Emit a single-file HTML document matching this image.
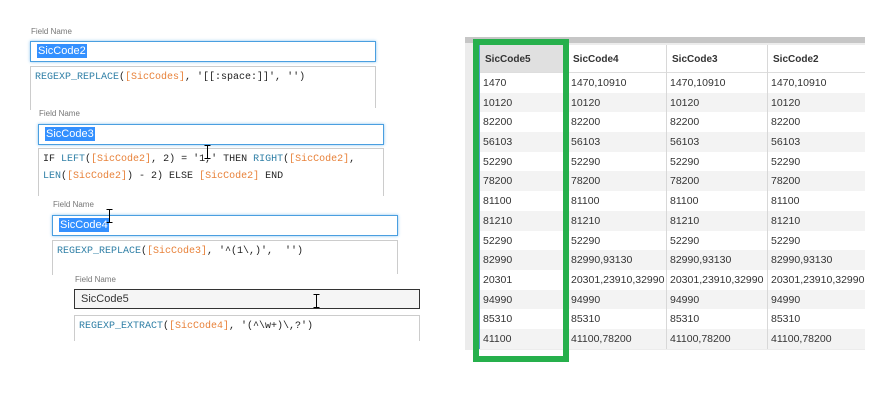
<!DOCTYPE html>
<html><head><meta charset="utf-8"><style>
*{margin:0;padding:0;box-sizing:border-box}
body{width:886px;height:404px;background:#fff;position:relative;overflow:hidden;font-family:"Liberation Sans",sans-serif}
.p{position:absolute;background:#fff;width:350px}
.fn{position:absolute;font-size:8px;color:#777}
.in{position:absolute;left:0;width:346px;height:21px;border:1px solid #4a9fe0;box-shadow:0 0 3px #8cc4f0;font-size:11px;padding:3px 6px;color:#333}
.sel{background:#3390ff;color:#fff;padding:1px 1px}
.fx{position:absolute;left:0;width:346px;border:1px solid #ccc;border-bottom:none;font-family:"Liberation Mono",monospace;font-size:10px;color:#222;padding:2px 4px;line-height:17px;white-space:pre}
.b{color:#2f7fa6}.o{color:#e8823a}
.tbl{position:absolute;left:465px;top:37px;width:400px;height:313px;background:#ececec}
.bar{position:absolute;left:0;top:0;width:400px;height:6px;background:#c6c6c6}
.col{position:absolute;top:8px;background:#fff}
.cell{height:19.7px;font-size:10.5px;color:#333;padding:4px 3px;white-space:nowrap;overflow:hidden}
.h{height:28px;font-weight:bold;font-size:10px;padding:9px 5px;border-bottom:1px solid #ddd;background:#fff}
.col>.cell:nth-child(odd){background:#f3f3f3}
.col>.cell:nth-child(even){background:#fff}
.col>.h{background:#fff!important}
.green{position:absolute;left:473px;top:39px;width:96px;height:323px;border:6px solid #26b04c}
.cur{position:absolute;width:7px;height:14px}
</style></head><body>

<div class="p" style="left:30px;top:26px;height:84px">
<div class="fn" style="left:1px;top:1px">Field Name</div>
<div class="in" style="top:15px"><span class="sel">SicCode2</span></div>
<div class="fx" style="top:40px;height:44px"><span class="b">REGEXP_REPLACE</span>(<span class="o">[SicCodes]</span>, '[[:space:]]', '')</div>
</div>

<div class="p" style="left:38px;top:108px;height:88px">
<div class="fn" style="left:1px;top:1px">Field Name</div>
<div class="in" style="top:16px"><span class="sel">SicCode3</span></div>
<div class="fx" style="top:40px;height:48px">IF <span class="b">LEFT</span>(<span class="o">[SicCode2]</span>, 2) = '1,' THEN <span class="b">RIGHT</span>(<span class="o">[SicCode2]</span>,
<span class="b">LEN</span>(<span class="o">[SicCode2]</span>) - 2) ELSE <span class="o">[SicCode2]</span> END</div>
<svg class="cur" style="left:166px;top:37px" viewBox="0 0 7 14"><path d="M0.5 0.5h6M3.5 0.5v13M0.5 13.5h6" stroke="#000" stroke-width="1" fill="none"/></svg>
</div>

<div class="p" style="left:52px;top:199px;height:76px">
<div class="fn" style="left:1px;top:1px">Field Name</div>
<div class="in" style="top:16px"><span class="sel">SicCode4</span></div>
<div class="fx" style="top:41px;height:35px"><span class="b">REGEXP_REPLACE</span>(<span class="o">[SicCode3]</span>, '^(1\,)',  '')</div>
<svg class="cur" style="left:54px;top:10px" viewBox="0 0 7 14"><path d="M0.5 0.5h6M3.5 0.5v13M0.5 13.5h6" stroke="#000" stroke-width="1" fill="none"/></svg>
</div>

<div class="p" style="left:74px;top:274px;height:67px">
<div class="fn" style="left:1px;top:1px">Field Name</div>
<div class="in" style="top:15px;border:1px solid #333;box-shadow:none;background:#f5f5f5;height:20px">SicCode5</div>
<div class="fx" style="top:41px;height:26px"><span class="b">REGEXP_EXTRACT</span>(<span class="o">[SicCode4]</span>, '(^\w+)\,?')</div>
<svg class="cur" style="left:239px;top:20px" viewBox="0 0 7 14"><path d="M0.5 0.5h6M3.5 0.5v13M0.5 13.5h6" stroke="#000" stroke-width="1" fill="none"/></svg>
</div>

<div class="tbl"><div class="bar"></div>
<div class="col" style="left:14px;width:88px;border-left:1px solid #5a9fd8">
<div class="cell h" style="background:#e0e0e0!important">SicCode5</div>
<div class="cell">1470</div><div class="cell">10120</div><div class="cell">82200</div><div class="cell">56103</div><div class="cell">52290</div><div class="cell">78200</div><div class="cell">81100</div><div class="cell">81210</div><div class="cell">52290</div><div class="cell">82990</div><div class="cell">20301</div><div class="cell">94990</div><div class="cell">85310</div><div class="cell">41100</div>
</div>
<div class="col" style="left:103px;width:99px;border-right:1px solid #d8d8d8">
<div class="cell h">SicCode4</div>
<div class="cell">1470,10910</div><div class="cell">10120</div><div class="cell">82200</div><div class="cell">56103</div><div class="cell">52290</div><div class="cell">78200</div><div class="cell">81100</div><div class="cell">81210</div><div class="cell">52290</div><div class="cell">82990,93130</div><div class="cell">20301,23910,32990</div><div class="cell">94990</div><div class="cell">85310</div><div class="cell">41100,78200</div>
</div>
<div class="col" style="left:202px;width:101px;border-right:1px solid #d8d8d8">
<div class="cell h">SicCode3</div>
<div class="cell">1470,10910</div><div class="cell">10120</div><div class="cell">82200</div><div class="cell">56103</div><div class="cell">52290</div><div class="cell">78200</div><div class="cell">81100</div><div class="cell">81210</div><div class="cell">52290</div><div class="cell">82990,93130</div><div class="cell">20301,23910,32990</div><div class="cell">94990</div><div class="cell">85310</div><div class="cell">41100,78200</div>
</div>
<div class="col" style="left:303px;width:97px">
<div class="cell h">SicCode2</div>
<div class="cell">1470,10910</div><div class="cell">10120</div><div class="cell">82200</div><div class="cell">56103</div><div class="cell">52290</div><div class="cell">78200</div><div class="cell">81100</div><div class="cell">81210</div><div class="cell">52290</div><div class="cell">82990,93130</div><div class="cell">20301,23910,32990</div><div class="cell">94990</div><div class="cell">85310</div><div class="cell">41100,78200</div>
</div>
</div>
<div class="green"></div>
</body></html>
